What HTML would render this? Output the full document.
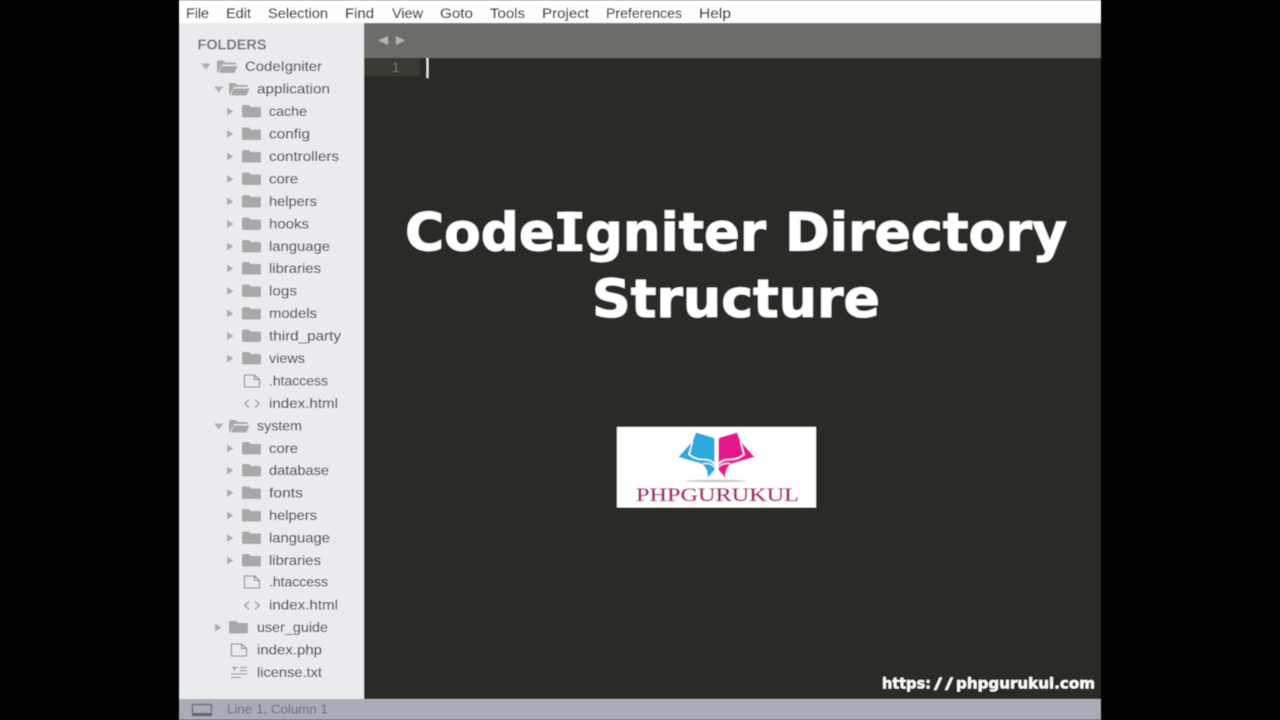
<!DOCTYPE html>
<html>
<head>
<meta charset="utf-8">
<style>
html,body{margin:0;padding:0;width:1280px;height:720px;overflow:hidden;background:#000}
svg{display:block;position:absolute;left:0;top:0}
.m{font-family:"Liberation Sans",sans-serif;font-size:13.5px;fill:#2c2c2c;stroke:#2c2c2c;stroke-width:.15px}
.s{font-family:"Liberation Sans",sans-serif;font-size:13.5px;fill:#505053;stroke:#505053;stroke-width:.12px}
.f{fill:#a8a8a8}
.o{fill:none;stroke:#848485;stroke-width:1.1}
.a{fill:#aeaeae}
.t{font-family:"DejaVu Sans",sans-serif;font-weight:700;font-size:52.5px;fill:#fff;stroke:#fff;stroke-width:.7px}
.u{font-family:"DejaVu Sans",sans-serif;font-weight:700;font-size:15px;fill:#fff;stroke:#fff;stroke-width:.25px}
</style>
</head>
<body>
<svg width="1280" height="720" viewBox="0 0 1280 720" xmlns="http://www.w3.org/2000/svg">
<defs>
<filter id="b" x="-2%" y="-2%" width="104%" height="104%"><feGaussianBlur stdDeviation="0.4"/></filter>
<g id="fc"><path class="f" d="M0 2.5Q0 1 1.5 1H7L9 3H17.5Q19 3 19 4.5V12Q19 13.5 17.5 13.5H1.5Q0 13.5 0 12Z"/></g>
<g id="fo"><path class="f" d="M0 3Q0 1.5 1.5 1.5H6.5L8.500 3.500H17.5Q19 3.500 19 5V5.500H5L1 13.5H0Z"/><path class="f" d="M4.500 7H20.500L18 13Q17.500 14 16 14H2Z"/></g>
<path id="ar" class="a" d="M0 .5L6.500 4.500L0 8.500Z"/>
<path id="ad" class="a" d="M0 .5H9.500L4.750 6.500Z"/>
<g id="doc"><path class="o" d="M.5 .5H10.500L15.500 5V12.500H.5Z"/><path class="o" d="M10.500 .5V5H15.500"/></g>
<g id="code"><path class="o" d="M5 1.500L.8 5.500L5 9.500M11 1.500L15.200 5.500L11 9.500"/></g>
<g id="wing">
<path d="M678.500 457L690.500 443.500L692.500 441.500L696 432.500L713 437.500Q714.500 438 714.500 440V470L707.500 478Q708.500 470 702.500 464Z"/>
<path d="M692.500 441.500L689 454.500Q696 460 704 459.500Q711 459.500 714.500 464" fill="none" stroke="#fff" stroke-width="1.500"/>
<path d="M703 463.500Q710 462.500 714.500 467" fill="none" stroke="#fff" stroke-width="1.200"/>
</g>
</defs>

<rect width="1280" height="720" fill="#000"/>
<g filter="url(#b)">
<rect x="179" y="0" width="922" height="23" fill="#fefefe"/>
<rect x="179" y="23" width="185" height="676" fill="#e9ebee"/>
<rect x="364" y="23" width="737" height="35" fill="#6c6d67"/>
<rect x="364" y="58" width="737" height="641" fill="#2a2b25"/>
<rect x="364" y="58" width="56" height="18" fill="#393a30"/>
<rect x="179" y="699" width="922" height="21" fill="#a8adb7"/>

<!-- menu -->
<text class="m" x="186" y="18" textLength="23" lengthAdjust="spacingAndGlyphs">File</text>
<text class="m" x="226" y="18" textLength="25" lengthAdjust="spacingAndGlyphs">Edit</text>
<text class="m" x="268" y="18" textLength="60" lengthAdjust="spacingAndGlyphs">Selection</text>
<text class="m" x="345" y="18" textLength="29" lengthAdjust="spacingAndGlyphs">Find</text>
<text class="m" x="392" y="18" textLength="31" lengthAdjust="spacingAndGlyphs">View</text>
<text class="m" x="440" y="18" textLength="33" lengthAdjust="spacingAndGlyphs">Goto</text>
<text class="m" x="490" y="18" textLength="35" lengthAdjust="spacingAndGlyphs">Tools</text>
<text class="m" x="542" y="18" textLength="47" lengthAdjust="spacingAndGlyphs">Project</text>
<text class="m" x="606" y="18" textLength="76" lengthAdjust="spacingAndGlyphs">Preferences</text>
<text class="m" x="699" y="18" textLength="32" lengthAdjust="spacingAndGlyphs">Help</text>

<!-- tab nav -->
<path d="M388 36V45L378 40.500Z" fill="#b4b5b0"/>
<path d="M396 36V45L405 40.500Z" fill="#b4b5b0"/>

<!-- gutter -->
<text x="392" y="72" font-family="'Liberation Sans',sans-serif" font-size="13.500" fill="#75766c">1</text>
<rect x="426.500" y="58" width="2" height="20" fill="#e6e6e2"/>

<!-- sidebar -->
<text x="197.500" y="49.500" font-family="'Liberation Sans',sans-serif" font-size="14.500" font-weight="700" fill="#777" textLength="69" lengthAdjust="spacingAndGlyphs">FOLDERS</text>

<use href="#ad" x="201" y="63"/><use href="#fo" x="217" y="59"/>
<text class="s" x="245" y="71" textLength="77" lengthAdjust="spacingAndGlyphs">CodeIgniter</text>
<use href="#ad" x="214" y="86"/><use href="#fo" x="229" y="81.500"/>
<text class="s" x="257" y="93.500" textLength="73" lengthAdjust="spacingAndGlyphs">application</text>

<use href="#ar" x="227" y="107"/><use href="#fc" x="242" y="104"/>
<text class="s" x="269" y="116" textLength="38" lengthAdjust="spacingAndGlyphs">cache</text>
<use href="#ar" x="227" y="129.500"/><use href="#fc" x="242" y="126.500"/>
<text class="s" x="269" y="138.500" textLength="41" lengthAdjust="spacingAndGlyphs">config</text>
<use href="#ar" x="227" y="152"/><use href="#fc" x="242" y="149"/>
<text class="s" x="269" y="161" textLength="70" lengthAdjust="spacingAndGlyphs">controllers</text>
<use href="#ar" x="227" y="174.500"/><use href="#fc" x="242" y="171.500"/>
<text class="s" x="269" y="183.500" textLength="29" lengthAdjust="spacingAndGlyphs">core</text>
<use href="#ar" x="227" y="197"/><use href="#fc" x="242" y="194"/>
<text class="s" x="269" y="206" textLength="48" lengthAdjust="spacingAndGlyphs">helpers</text>
<use href="#ar" x="227" y="219.500"/><use href="#fc" x="242" y="216.500"/>
<text class="s" x="269" y="228.500" textLength="40" lengthAdjust="spacingAndGlyphs">hooks</text>
<use href="#ar" x="227" y="242"/><use href="#fc" x="242" y="239"/>
<text class="s" x="269" y="251" textLength="61" lengthAdjust="spacingAndGlyphs">language</text>
<use href="#ar" x="227" y="264"/><use href="#fc" x="242" y="261"/>
<text class="s" x="269" y="273" textLength="52" lengthAdjust="spacingAndGlyphs">libraries</text>
<use href="#ar" x="227" y="286.500"/><use href="#fc" x="242" y="283.500"/>
<text class="s" x="269" y="295.500" textLength="28" lengthAdjust="spacingAndGlyphs">logs</text>
<use href="#ar" x="227" y="309"/><use href="#fc" x="242" y="306"/>
<text class="s" x="269" y="318" textLength="48" lengthAdjust="spacingAndGlyphs">models</text>
<use href="#ar" x="227" y="331.500"/><use href="#fc" x="242" y="328.500"/>
<text class="s" x="269" y="340.500" textLength="72" lengthAdjust="spacingAndGlyphs">third_party</text>
<use href="#ar" x="227" y="354"/><use href="#fc" x="242" y="351"/>
<text class="s" x="269" y="363" textLength="36" lengthAdjust="spacingAndGlyphs">views</text>
<use href="#doc" x="244" y="374.500"/>
<text class="s" x="269" y="385.500" textLength="59" lengthAdjust="spacingAndGlyphs">.htaccess</text>
<use href="#code" x="244" y="398"/>
<text class="s" x="269" y="408" textLength="69" lengthAdjust="spacingAndGlyphs">index.html</text>

<use href="#ad" x="214" y="423"/><use href="#fo" x="229" y="418.500"/>
<text class="s" x="257" y="430.500" textLength="45" lengthAdjust="spacingAndGlyphs">system</text>
<use href="#ar" x="227" y="444"/><use href="#fc" x="242" y="441"/>
<text class="s" x="269" y="453" textLength="29" lengthAdjust="spacingAndGlyphs">core</text>
<use href="#ar" x="227" y="466"/><use href="#fc" x="242" y="463"/>
<text class="s" x="269" y="475" textLength="60" lengthAdjust="spacingAndGlyphs">database</text>
<use href="#ar" x="227" y="488.500"/><use href="#fc" x="242" y="485.500"/>
<text class="s" x="269" y="497.500" textLength="34" lengthAdjust="spacingAndGlyphs">fonts</text>
<use href="#ar" x="227" y="511"/><use href="#fc" x="242" y="508"/>
<text class="s" x="269" y="520" textLength="48" lengthAdjust="spacingAndGlyphs">helpers</text>
<use href="#ar" x="227" y="533.500"/><use href="#fc" x="242" y="530.500"/>
<text class="s" x="269" y="542.500" textLength="61" lengthAdjust="spacingAndGlyphs">language</text>
<use href="#ar" x="227" y="556"/><use href="#fc" x="242" y="553"/>
<text class="s" x="269" y="565" textLength="52" lengthAdjust="spacingAndGlyphs">libraries</text>
<use href="#doc" x="244" y="575.500"/>
<text class="s" x="269" y="586.500" textLength="59" lengthAdjust="spacingAndGlyphs">.htaccess</text>
<use href="#code" x="244" y="600"/>
<text class="s" x="269" y="609.500" textLength="69" lengthAdjust="spacingAndGlyphs">index.html</text>

<use href="#ar" x="215" y="623"/><use href="#fc" x="229" y="620"/>
<text class="s" x="257" y="632" textLength="71" lengthAdjust="spacingAndGlyphs">user_guide</text>
<use href="#doc" x="231" y="643.500"/>
<text class="s" x="257" y="654.500" textLength="65" lengthAdjust="spacingAndGlyphs">index.php</text>
<path class="o" d="M232 667.500H238M234.500 667.500V671M240 667.500H247M240 670.500H247M231 674H247M231 677.500H241"/>
<text class="s" x="257" y="677" textLength="65" lengthAdjust="spacingAndGlyphs">license.txt</text>

<!-- status bar -->
<rect x="192.500" y="704.500" width="19" height="11" rx="1" fill="none" stroke="#5f636b" stroke-width="1.200"/>
<rect x="192" y="713" width="20" height="3" fill="#5f636b"/>
<text x="227" y="713.500" font-family="'Liberation Sans',sans-serif" font-size="12.500" fill="#686c74" textLength="101" lengthAdjust="spacingAndGlyphs">Line 1, Column 1</text>

<!-- title -->
<text class="t" x="405" y="250.500" textLength="150" lengthAdjust="spacingAndGlyphs">Code</text>
<text class="t" x="559.700" y="250.500">I</text>
<rect x="557.500" y="212" width="24.500" height="6.500" fill="#fff"/>
<rect x="557.500" y="244.500" width="24.500" height="6.500" fill="#fff"/>
<text class="t" x="585" y="250.500" textLength="181" lengthAdjust="spacingAndGlyphs">gniter</text>
<text class="t" x="785" y="250.500" textLength="282" lengthAdjust="spacingAndGlyphs">Directory</text>
<text class="t" x="592" y="317" textLength="288" lengthAdjust="spacingAndGlyphs">Structure</text>

<!-- logo -->
<rect x="617" y="427" width="199" height="80.500" fill="#fff"/>
<use href="#wing" fill="#2aa9dc"/>
<use href="#wing" fill="#e6128c" transform="matrix(-1 0 0 1 1433 0)"/>
<ellipse cx="716" cy="481" rx="30" ry="1.300" fill="#ccc"/>
<text x="636" y="501" font-family="'Liberation Serif',serif" font-size="19px" fill="#a8256f" stroke="#a8256f" stroke-width=".35" textLength="163" lengthAdjust="spacingAndGlyphs">PHPGURUKUL</text>

<!-- url -->
<text class="u" x="882" y="688.500" textLength="49" lengthAdjust="spacingAndGlyphs">https:</text>
<text class="u" x="934" y="688.500" textLength="8" lengthAdjust="spacingAndGlyphs">/</text>
<text class="u" x="945" y="688.500" textLength="8" lengthAdjust="spacingAndGlyphs">/</text>
<text class="u" x="956" y="688.500" textLength="139" lengthAdjust="spacingAndGlyphs">phpgurukul.com</text>
</g>
</svg>
</body>
</html>
